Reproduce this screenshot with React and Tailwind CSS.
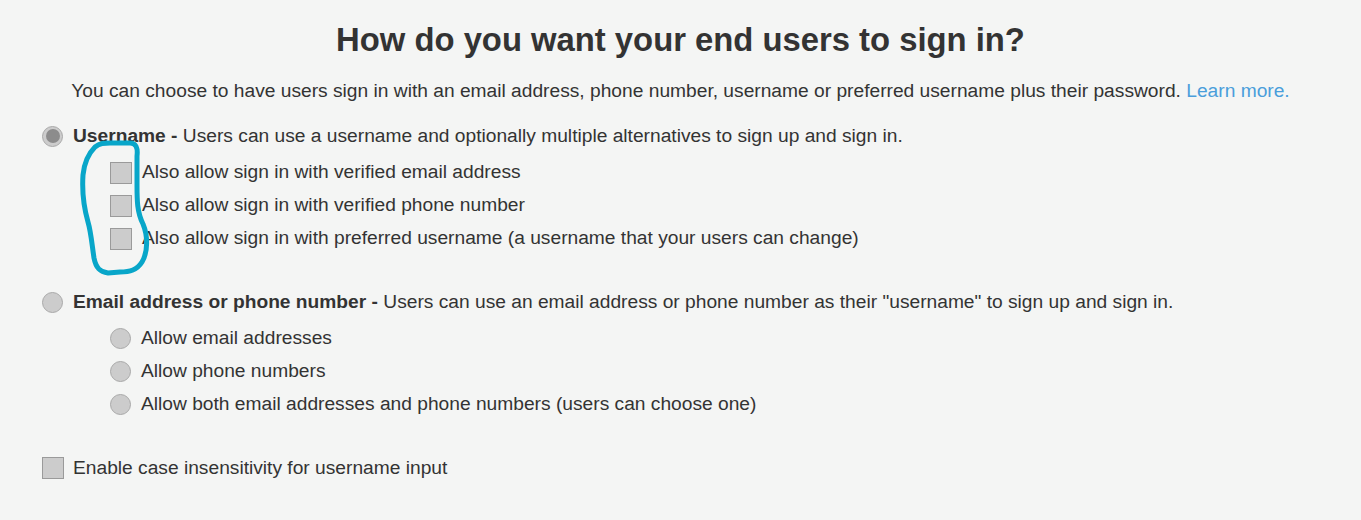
import React from 'react';

function Radio({ checked }) {
    return (
        <span className="flex h-[21px] w-[21px] shrink-0 items-center justify-center rounded-full border border-[#a9a9a9] bg-[#cccccc]">
            {checked && <span className="h-[14px] w-[14px] rounded-full bg-[#8c8c8c]" />}
        </span>
    );
}

function Checkbox() {
    return <span className="block h-[22px] w-[22px] shrink-0 border border-[#9a9a9a] bg-[#cccccc]" />;
}

function SubRow({ control, children }) {
    return (
        <div className="flex h-[33px] items-center pl-[110px]">
            {control}
            <span className="ml-[10px]">{children}</span>
        </div>
    );
}

export default function App() {
    return (
        <div
            className="relative min-h-[520px] w-full bg-[#f4f5f4] pt-[20px] text-[19.2px] text-[#333333]"
            style={{ fontFamily: '"Liberation Sans", Arial, sans-serif' }}
        >
            <h1 className="h-[40px] text-center text-[32.8px] font-bold leading-[40px]">
                How do you want your end users to sign in?
            </h1>
            <p className="mt-[18px] h-[26px] text-center leading-[26px]">
                You can choose to have users sign in with an email address, phone number, username or preferred username plus their password.{' '}
                <a className="text-[#4a9edb]">Learn more.</a>
            </p>

            <div className="mt-[17px] flex h-[30px] items-center pl-[42px]">
                <Radio checked />
                <span className="ml-[10px]">
                    <b>Username -</b> Users can use a username and optionally multiple alternatives to sign up and sign in.
                </span>
            </div>
            <div className="mt-[5px]">
                <SubRow control={<Checkbox />}>Also allow sign in with verified email address</SubRow>
                <SubRow control={<Checkbox />}>Also allow sign in with verified phone number</SubRow>
                <SubRow control={<Checkbox />}>Also allow sign in with preferred username (a username that your users can change)</SubRow>
            </div>

            <div className="mt-[32px] flex h-[30px] items-center pl-[42px]">
                <Radio />
                <span className="ml-[10px]">
                    <b>Email address or phone number -</b> Users can use an email address or phone number as their "username" to sign up and sign in.
                </span>
            </div>
            <div className="mt-[5px]">
                <SubRow control={<Radio />}>Allow email addresses</SubRow>
                <SubRow control={<Radio />}>Allow phone numbers</SubRow>
                <SubRow control={<Radio />}>Allow both email addresses and phone numbers (users can choose one)</SubRow>
            </div>

            <div className="mt-[32px] flex h-[30px] items-center pl-[42px]">
                <Checkbox />
                <span className="ml-[9px]">Enable case insensitivity for username input</span>
            </div>

            {/* hand-drawn highlight around the checkboxes */}
            <svg className="pointer-events-none absolute left-0 top-0" width="200" height="300" viewBox="0 0 200 300">
                <path
                    d="M95 147 C100 143 104 143 110 143 L130 143 C136 143 138 148 137 156 L137 185 C137 200 137 212 143 224 C148 236 148 252 142 262 C137 270 130 272 120 272 L108 273 C100 272 96 268 94 258 C92 245 91 232 88 222 C84 208 82 190 83 175 C84 165 87 155 95 147 Z"
                    fill="none"
                    stroke="#08a6c9"
                    strokeWidth="5"
                    strokeLinejoin="round"
                />
            </svg>
        </div>
    );
}
